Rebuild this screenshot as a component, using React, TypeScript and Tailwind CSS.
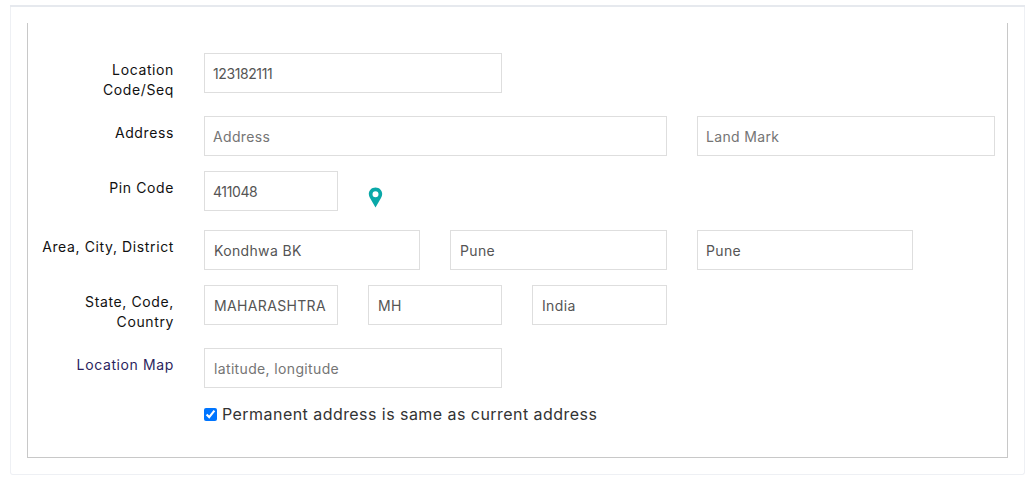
const fieldClass =
  "h-10 border border-[#dedede] bg-white pr-[9px] font-['Inter',sans-serif] text-[14px] text-[#555] outline-none placeholder:text-[#757575]";

function Field({
  width,
  value,
  placeholder,
  inset = "pl-[9px]",
  tracking = "tracking-[0.35px]",
}: {
  width: string;
  value?: string;
  placeholder?: string;
  inset?: string;
  tracking?: string;
}) {
  return <input className={`${fieldClass} ${width} ${inset} ${tracking}`} defaultValue={value} placeholder={placeholder} />;
}

function Label({ children, className = "text-[#111]" }: { children: React.ReactNode; className?: string }) {
  return (
    <label className={`w-[146px] shrink-0 pt-[7px] text-right text-[14px] leading-5 tracking-[0.62px] ${className}`}>
      {children}
    </label>
  );
}

function PinIcon() {
  return (
    <svg width="15" height="21" viewBox="0 0 15 21" className="ml-[30px] mt-4">
      <path
        fillRule="evenodd"
        fill="#0aa8a8"
        d="M7.5 0.5C3.6 0.5 0.8 3.4 0.8 7.1c0 1.4 0.5 2.7 1.2 3.9L7.5 20.6 13 11c0.7-1.2 1.2-2.5 1.2-3.9C14.2 3.4 11.4 0.5 7.5 0.5zM7.5 4.2a3 3 0 1 1 0 6 3 3 0 0 1 0-6z"
      />
    </svg>
  );
}

export default function App() {
  return (
    <div className="h-[486px] w-[1033px] overflow-hidden bg-white pl-[10px] pt-[5px] font-['Inter',sans-serif]">
      <div className="h-[2px] w-[1015px] bg-[#e6e9ee]" />
      <div className="h-[468px] w-[1015px] rounded-b-[3px] border-x border-b border-[#eef0f4] px-4 pt-4">
        <div className="h-[435px] w-[981px] border-x border-b border-[#c8c8c8] pt-[30px]">
          <div className="flex h-[63px]">
            <Label>
              Location
              <br />
              Code/Seq
            </Label>
            <div className="ml-[30px]">
              <Field width="w-[298px]" value="123182111" inset="pl-[8px]" tracking="tracking-[-0.4px]" />
            </div>
          </div>

          <div className="flex h-[55px]">
            <Label>Address</Label>
            <div className="ml-[30px] flex gap-[30px]">
              <Field width="w-[463px]" placeholder="Address" inset="pl-[8px]" />
              <Field width="w-[298px]" placeholder="Land Mark" inset="pl-[8px]" />
            </div>
          </div>

          <div className="flex h-[59px]">
            <Label>Pin Code</Label>
            <div className="ml-[30px] flex items-start">
              <Field width="w-[134px]" value="411048" inset="pl-[8px]" tracking="tracking-[-0.4px]" />
              <PinIcon />
            </div>
          </div>

          <div className="flex h-[55px]">
            <Label>Area, City, District</Label>
            <div className="ml-[30px] flex gap-[30px]">
              <Field width="w-[216px]" value="Kondhwa BK" />
              <Field width="w-[217px]" value="Pune" />
              <Field width="w-[216px]" value="Pune" inset="pl-[8px]" />
            </div>
          </div>

          <div className="flex h-[63px]">
            <Label>
              State, Code,
              <br />
              Country
            </Label>
            <div className="ml-[30px] flex gap-[30px]">
              <Field width="w-[134px]" value="MAHARASHTRA" />
              <Field width="w-[134px]" value="MH" />
              <Field width="w-[135px]" value="India" />
            </div>
          </div>

          <div className="flex h-[56px]">
            <Label className="text-[#2c1f5e]">Location Map</Label>
            <div className="ml-[30px]">
              <Field width="w-[298px]" placeholder="latitude, longitude" />
            </div>
          </div>

          <label className="ml-[176px] flex items-center gap-[5px] text-[16px] leading-5 tracking-[0.45px] text-[#333]">
            <input type="checkbox" defaultChecked className="m-0 h-[13px] w-[13px] accent-[#0075ff]" />
            Permanent address is same as current address
          </label>
        </div>
      </div>
    </div>
  );
}
